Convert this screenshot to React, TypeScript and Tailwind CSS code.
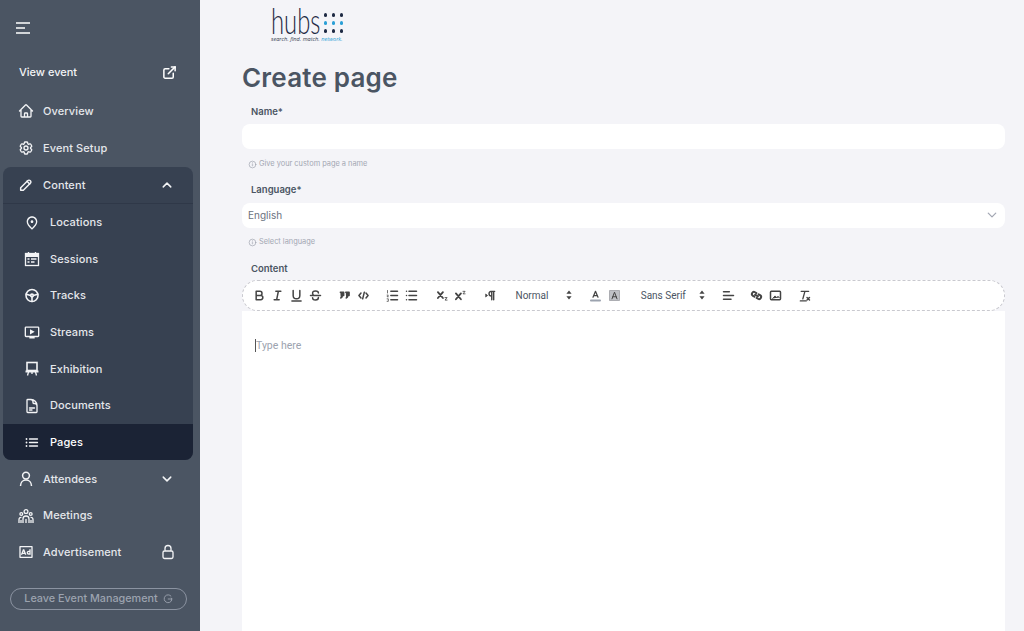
import type { ReactNode } from "react";
import { FiExternalLink } from "react-icons/fi";
import { HiOutlineHome, HiOutlineCog6Tooth, HiOutlineDocumentText, HiOutlineListBullet, HiOutlineChevronUp, HiOutlineChevronDown, HiOutlineLockClosed, HiOutlineInformationCircle } from "react-icons/hi2";
import { MdOutlinePlace, MdOutlineOndemandVideo } from "react-icons/md";
import { TbSteeringWheel, TbPencil } from "react-icons/tb";
import { RiAdvertisementLine } from "react-icons/ri";

const font = "font-['Inter','Liberation_Sans',sans-serif]";

// small drawn icons that the packages don't have
const SessionsIcon = () => (
  <svg viewBox="0 0 16 16" className="w-[16px] h-[16px]" fill="none" stroke="currentColor">
    <rect x="1.500" y="2.500" width="13" height="12" strokeWidth="1.300" />
    <rect x="1.500" y="2.500" width="13" height="3" fill="currentColor" strokeWidth="1" />
    <path d="M4.500 1v2M11.500 1v2" strokeWidth="1.300" />
    <path d="M3.500 8h2M7 8h5.500M3.500 11h2M7 11h3.500" strokeWidth="1.400" />
  </svg>
);

const ExhibitionIcon = () => (
  <svg viewBox="0 0 16 16" className="w-[16px] h-[16px]" fill="none" stroke="currentColor" strokeWidth="1.600">
    <rect x="3" y="1.500" width="10" height="8" />
    <path d="M1.500 10.500h13" strokeWidth="2" />
    <path d="M4.500 11l-1 3.500M11.500 11l1 3.500M8 11v2" strokeWidth="1.300" />
  </svg>
);

const UserIcon = () => (
  <svg viewBox="0 0 16 16" className="w-[16px] h-[16px]" fill="none" stroke="currentColor" strokeWidth="1.500">
    <circle cx="8" cy="4.600" r="3.400" />
    <path d="M2.500 15c0-3.600 2.200-6 5.500-6s5.500 2.400 5.500 6" />
  </svg>
);

const MeetingsIcon = () => (
  <svg viewBox="0 0 16 16" className="w-[16px] h-[16px]" fill="none" stroke="currentColor" strokeWidth="1.300">
    <circle cx="8" cy="3.500" r="1.900" />
    <circle cx="3.300" cy="6" r="1.400" />
    <circle cx="12.700" cy="6" r="1.400" />
    <path d="M5 15v-4a3 3 0 0 1 6 0v4M8 11v4M1 15v-3.500a2.200 2.200 0 0 1 2.500-2.200M15 15v-3.500a2.200 2.200 0 0 0-2.500-2.200M3 12v3M13 12v3" />
  </svg>
);

const LeaveIcon = () => (
  <svg viewBox="0 0 10 10" className="w-[10px] h-[10px]" fill="none" stroke="currentColor" strokeWidth="0.900">
    <path d="M8.200 2.400A3.900 3.900 0 1 0 8.800 6" />
    <path d="M4.800 5h4.400M7.800 3.800L9.200 5 7.800 6.200" />
  </svg>
);

const MenuIcon = () => (
  <svg viewBox="0 0 14 12" className="w-[14px] h-[12px]" fill="none" stroke="#fff" strokeWidth="1.500">
    <path d="M0 1h14M0 6h9M0 11h14" />
  </svg>
);

function NavRow({ icon, label, right }: { icon: ReactNode; label: string; right?: ReactNode }) {
  return (
    <div className="flex items-center h-[36.75px] shrink-0 text-[11px] font-medium tracking-[0.1px] text-gray-200">
      <span className="w-[16px] h-[16px] flex items-center justify-center text-gray-100">{icon}</span>
      <span className="ml-[9px]">{label}</span>
      {right && <span className="ml-auto flex items-center text-gray-100">{right}</span>}
    </div>
  );
}

function SubRow({ icon, label, active }: { icon: ReactNode; label: string; active?: boolean }) {
  return (
    <div className={`flex items-center h-[36.6px] pl-[21px] text-[11px] font-medium tracking-[0.1px] ${active ? "bg-[#1b2335] text-white rounded-b-lg" : "text-gray-200"}`}>
      <span className="w-[16px] h-[16px] flex items-center justify-center text-gray-100">{icon}</span>
      <span className="ml-[10px]">{label}</span>
    </div>
  );
}

function Sidebar() {
  return (
    <aside className="w-[200px] shrink-0 h-full bg-[#4b5563] flex flex-col">
      <div className="h-[54px] pl-[16px] pt-[22px] shrink-0">
        <MenuIcon />
      </div>
      <div className="flex items-center h-[39px] shrink-0 pb-[2px] pl-[19px] pr-[23px] text-[11px] font-medium text-gray-100">
        <span>View event</span>
        <FiExternalLink className="ml-auto w-[15px] h-[15px] text-white stroke-[2.4]" />
      </div>
      <div className="pl-[18px] pr-[26px]">
        <NavRow icon={<HiOutlineHome className="w-[18px] h-[18px] stroke-2" />} label="Overview" />
        <NavRow icon={<HiOutlineCog6Tooth className="w-[18px] h-[18px] stroke-2" />} label="Event Setup" />
      </div>
      <div className="ml-[3px] w-[190px] rounded-lg bg-[#374151]">
        <div className="pl-[15px] pr-[20px] border-b border-[#2f3848]">
          <NavRow icon={<TbPencil className="w-[18px] h-[18px] stroke-[2.2]" />} label="Content" right={<HiOutlineChevronUp className="w-[12px] h-[12px] stroke-[3]" />} />
        </div>
        <SubRow icon={<MdOutlinePlace className="w-[18px] h-[18px]" />} label="Locations" />
        <SubRow icon={<SessionsIcon />} label="Sessions" />
        <SubRow icon={<TbSteeringWheel className="w-[17px] h-[17px] stroke-[2.400]" />} label="Tracks" />
        <SubRow icon={<MdOutlineOndemandVideo className="w-[17px] h-[17px]" />} label="Streams" />
        <SubRow icon={<ExhibitionIcon />} label="Exhibition" />
        <SubRow icon={<HiOutlineDocumentText className="w-[18px] h-[18px] stroke-2" />} label="Documents" />
        <SubRow icon={<HiOutlineListBullet className="w-[19px] h-[19px] stroke-2" />} label="Pages" active />
      </div>
      <div className="pl-[18px] pr-[26px]">
        <NavRow icon={<UserIcon />} label="Attendees" right={<HiOutlineChevronDown className="w-[12px] h-[12px] mr-[1px] stroke-[3]" />} />
        <NavRow icon={<MeetingsIcon />} label="Meetings" />
        <NavRow icon={<RiAdvertisementLine className="w-[18px] h-[18px]" />} label="Advertisement" right={<HiOutlineLockClosed className="w-[16px] h-[16px] mr-[-2px] stroke-2" />} />
      </div>
      <div className="mt-[17px] ml-[10px] w-[177px] h-[22px] rounded-full border border-[#8b93a1] flex items-center justify-center gap-[5px] text-[10.800px] font-medium text-[#9ca3af]">
        <span>Leave Event Management</span>
        <LeaveIcon />
      </div>
    </aside>
  );
}

function Logo() {
  const dots = ["#1e2a44", "#1e2a44", "#1e2a44", "#2a9fd6", "#2a9fd6", "#2a9fd6", "#1e2a44", "#1e2a44", "#1e2a44"];
  return (
    <div className="ml-[29px] pt-[6px] h-[42px] w-[72px] shrink-0">
      <div className="flex items-start h-[28px]">
        <span className="font-['Lato',sans-serif] font-light text-[35px] leading-[28px] text-[#1e2a44] mr-[-21px] origin-left scale-x-[0.68] whitespace-nowrap">hubs</span>
        <div className="grid grid-cols-3 gap-x-[4.800px] gap-y-[4.600px] mt-[7px] ml-[1px]">
          {dots.map((c, i) => (
            <span key={i} className="w-[3.600px] h-[3.600px] rounded-full" style={{ backgroundColor: c }} />
          ))}
        </div>
      </div>
      <div className="mt-[2px] text-[5.600px] leading-[7px] italic font-['Open_Sans',sans-serif] text-[#374151] whitespace-nowrap">
        search. find. match. <span className="text-[#2a9fd6]">network.</span>
      </div>
    </div>
  );
}

function Hint({ text }: { text: string }) {
  return (
    <div className="flex items-center h-[12px] pl-[6px] text-[7.400px] text-[#a3a7b3]">
      <HiOutlineInformationCircle className="w-[9px] h-[9px] mr-[2px] text-[#8f94a0]" />
      <span>{text}</span>
    </div>
  );
}

const Q = ({ children }: { children: ReactNode }) => (
  <span className="w-[18.600px] h-[18px] flex items-center justify-center shrink-0">
    <svg viewBox="0 0 18 18" className="w-[15px] h-[15px]" fill="none" stroke="#444" strokeWidth="1.800" strokeLinecap="round" strokeLinejoin="round">
      {children}
    </svg>
  </span>
);

const Arrows = () => (
  <svg viewBox="0 0 8 12" className="w-[8px] h-[12px]" fill="#444">
    <path d="M4 1.500L6.600 4.800H1.400zM4 10.500L1.400 7.200h5.200z" />
  </svg>
);

function Toolbar() {
  return (
    <div className="h-[30.500px] bg-white rounded-[16px] border border-dashed border-[#c9c9cf] flex items-center pl-[7px]">
      <Q>
        <path d="M5 4h4.500a2.500 2.500 0 0 1 0 5H5zM5 9h5.500a2.500 2.500 0 0 1 0 5H5z" />
      </Q>
      <Q>
        <path d="M7 4h6M5 14h6M8 14l2-10" />
      </Q>
      <Q>
        <path d="M5 3v6a4 4 0 0 0 8 0V3M3.500 15.500h11" />
      </Q>
      <Q>
        <path d="M3 9h12M12.500 6c0-1.500-1.500-2.500-3.500-2.500S5.500 4.500 5.500 6.200c0 1 .6 2 1.500 2.800M12.500 11.500c0 1.800-1.500 3-3.500 3s-3.500-1-3.500-2.700" />
      </Q>
      <div className="w-[11px] shrink-0" />
      <Q>
        <path d="M4 5h4v4H6.500c0 1.500-.8 2.500-2 3M10.500 5h4v4H13c0 1.500-.8 2.500-2 3" fill="#444" />
      </Q>
      <Q>
        <path d="M6 6L3.500 9 6 12M12 6l2.500 3-2.500 3M10 5l-2 8" />
      </Q>
      <div className="w-[11px] shrink-0" />
      <Q>
        <path d="M7 4h8M7 9h8M7 14h8" />
        <path d="M3 3v3M2.500 8.500h1.500l-1.500 2h1.500M2.500 13h1.500v3H2.500" strokeWidth="0.900" />
      </Q>
      <Q>
        <path d="M6 4h9M6 9h9M6 14h9M3 4h.01M3 9h.01M3 14h.01" />
      </Q>
      <div className="w-[12px] shrink-0" />
      <Q>
        <path d="M3.500 5l6 7M9.500 5l-6 7" strokeWidth="2.200" />
        <path d="M12 11.500h2.500l-2.500 3h2.500" strokeWidth="1" />
      </Q>
      <Q>
        <path d="M3.500 6.500l6 7M9.500 6.500l-6 7" strokeWidth="2.200" />
        <path d="M12 4h2.500l-2.500 3h2.500" strokeWidth="1" />
      </Q>
      <div className="w-[11px] shrink-0" />
      <Q>
        <path d="M3.500 7.500l2 1.500-2 1.500z" fill="#444" strokeWidth="0.900" />
        <path d="M9 4h5M10 9.500a2.700 2.700 0 0 1 0-5.500M10.500 4v10M12.800 4v10" strokeWidth="1.700" />
      </Q>
      <div className="ml-[16px] w-[57px] flex items-center justify-between text-[10px] text-[#4b5563] font-['Roboto',sans-serif] shrink-0">
        <span>Normal</span>
        <Arrows />
      </div>
      <div className="w-[14px] shrink-0" />
      <Q>
        <path d="M6 11l3-7 3 7M7 9h4" strokeWidth="1.500" />
        <path d="M3.500 15h11" stroke="#9ca3af" strokeWidth="2.200" />
      </Q>
      <Q>
        <rect x="3" y="3" width="12" height="12" fill="#bfc1c6" stroke="#9a9ca1" strokeWidth="0.900" strokeLinecap="butt" />
        <path d="M6 13l3-8 3 8M7 10.500h4" strokeWidth="1.200" />
      </Q>
      <div className="ml-[17px] w-[65px] flex items-center justify-between text-[10px] text-[#4b5563] font-['Roboto',sans-serif] shrink-0">
        <span>Sans Serif</span>
        <Arrows />
      </div>
      <div className="w-[13px] shrink-0" />
      <Q>
        <path d="M3 4.500h7M3 9h12M3 13.500h9" />
      </Q>
      <div className="w-[10px] shrink-0" />
      <Q>
        <path d="M7.500 6.500H5.500a2.500 2.500 0 0 0 0 5h2M10.500 6.500h2a2.500 2.500 0 0 1 0 5h-2M7 9h4" transform="rotate(30 9 9)" strokeWidth="2.300" />
      </Q>
      <Q>
        <rect x="3" y="4" width="12" height="10" rx="1" />
        <path d="M5.500 12.500l3-3 2 2 1.500-1.500 1.500 1.500" fill="#444" strokeWidth="1.100" />
      </Q>
      <div className="w-[11px] shrink-0" />
      <Q>
        <path d="M5 4h9M9.500 4l-2.500 9M4 15.500h7" strokeWidth="1.600" />
        <path d="M12 11.500l3 3M15 11.500l-3 3" strokeWidth="1.700" />
      </Q>
    </div>
  );
}

export default function App() {
  return (
    <div className={`${font} w-[1024px] h-[631px] overflow-hidden flex bg-[#f4f4f8]`}>
      <Sidebar />
      <main className="flex-1 min-w-0 pl-[42px] pr-[19px] flex flex-col">
        <Logo />
        <h1 className="mt-[18px] text-[26px] leading-[36px] font-semibold text-[#4b5563] tracking-[0.2px]">Create page</h1>
        <label className="mt-[9px] pl-[9px] h-[14px] leading-[14px] text-[9.500px] font-semibold text-[#4b5563]">Name*</label>
        <div className="mt-[5px] h-[25px] rounded-lg bg-white shrink-0" />
        <div className="mt-[9px]">
          <Hint text="Give your custom page a name" />
        </div>
        <label className="mt-[13px] pl-[9px] h-[14px] leading-[14px] text-[9.500px] font-semibold text-[#4b5563]">Language*</label>
        <div className="mt-[6px] h-[25px] rounded-lg bg-white shrink-0 flex items-center pl-[6px] pr-[7px] pb-[1px] text-[10px] text-[#6b7280]">
          <span>English</span>
          <HiOutlineChevronDown className="ml-auto w-[12px] h-[12px] text-[#a3a7b3] stroke-[2.500]" />
        </div>
        <div className="mt-[8px]">
          <Hint text="Select language" />
        </div>
        <label className="mt-[14px] pl-[9px] h-[14px] leading-[14px] text-[9.500px] font-semibold text-[#4b5563]">Content</label>
        <div className="mt-[4px]">
          <Toolbar />
        </div>
        <div className="flex-1 bg-white pl-[13px] pt-[27px] text-[10.500px] text-[#9ca3af] font-['Roboto',sans-serif]">
          <span className="border-l border-[#555]">Type here</span>
        </div>
      </main>
    </div>
  );
}
